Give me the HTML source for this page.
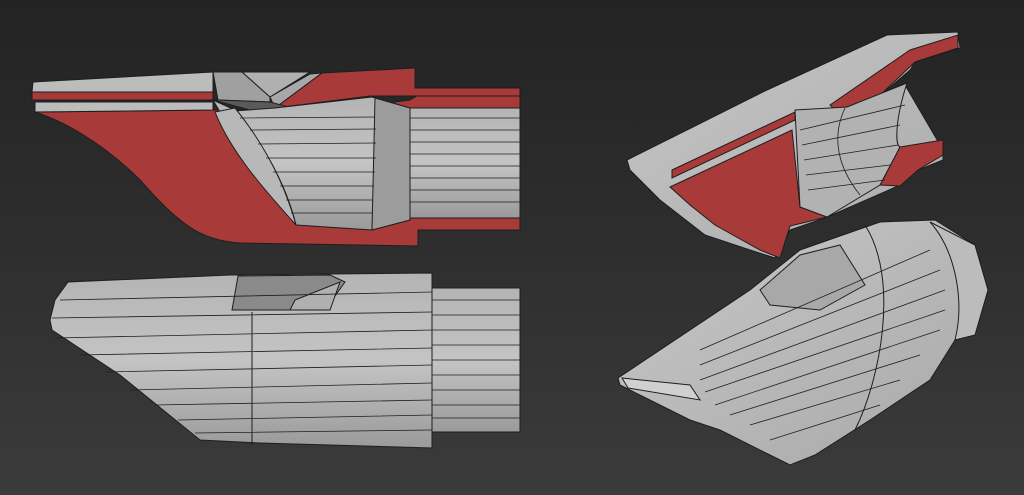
<!DOCTYPE html>
<html><head><style>
html,body{margin:0;padding:0;width:1024px;height:495px;overflow:hidden}
body{background:linear-gradient(#232323,#2e2e2e 50%,#3b3b3b)}
svg{display:block}
</style></head><body>
<svg width="1024" height="495" viewBox="0 0 1024 495" xmlns="http://www.w3.org/2000/svg">
<defs>
<linearGradient id="g1" x1="0" y1="0" x2="0" y2="1"><stop offset="0" stop-color="#b4b4b4"/><stop offset=".5" stop-color="#c4c4c4"/><stop offset="1" stop-color="#9a9a9a"/></linearGradient>
<linearGradient id="g2" x1="0" y1="0" x2="1" y2="1"><stop offset="0" stop-color="#c8c8c8"/><stop offset="1" stop-color="#a8a8a8"/></linearGradient>
</defs>
<g stroke="#1e1e1e" stroke-width="1">
<!-- top-left object -->
<path d="M35,112 L213,110 L300,110 L372,105 L410,100 L430,88 L520,88 L520,230 L418,230 L418,246 L240,243 C200,240 180,225 140,180 C100,140 60,120 35,112Z" fill="#a83a3a"/>
<path d="M33,82 L213,72 L213,92 L32,92Z" fill="#bcbcbc"/>
<path d="M32,92 L213,92 L213,100 L32,100Z" fill="#a83a3a"/>
<path d="M35,102 L213,102 L213,110 L35,112Z" fill="#bcbcbc"/>
<path d="M213,72 L242,72 L270,97 L270,102 L218,100 Z" fill="#a0a0a0"/>
<path d="M242,72 L310,72 L270,97Z" fill="#b0b0b0"/>
<path d="M270,97 L310,74 L322,73 L275,108Z" fill="#a8a8a8"/>
<path d="M322,73 L415,68 L415,88 L520,88 L520,96 L415,96 L370,96 L275,108Z" fill="#a83a3a"/>
<path d="M213,100 L218,100 L270,102 L300,110 L250,110 Z" fill="#5a5a5a"/>
<path d="M213,100 L235,110 C260,140 285,180 296,225 L372,230 L410,220 L410,108 L372,97 L275,108 L220,112 Z" fill="url(#g1)"/>
<path d="M215,112 L235,108 C265,145 285,185 296,225 C260,185 230,150 215,112Z" fill="#b8b8b8"/>
<path d="M410,108 L520,108 L520,218 L410,218Z" fill="url(#g1)"/>
<path d="M375,98 L410,108 L410,220 L372,230Z" fill="#9c9c9c"/>
<g stroke-width=".8" fill="none">
<path d="M240,118 L375,117 M250,130 L376,129 M258,144 L376,143 M266,158 L376,158 M273,172 L375,172 M280,186 L374,186 M286,200 L373,200 M291,213 L373,213"/>
<path d="M410,118 L520,118 M410,130 L520,130 M410,142 L520,142 M410,154 L520,154 M410,166 L520,166 M410,178 L520,178 M410,190 L520,190 M410,202 L520,202"/>
</g>
<!-- bottom-left object -->
<path d="M68,282 L230,275 L432,273 L432,448 L260,443 L200,440 L120,375 L52,330 L50,320 L55,300Z" fill="url(#g1)"/>
<path d="M432,288 L520,288 L520,432 L432,432Z" fill="url(#g1)"/>
<path d="M238,276 L330,275 L345,282 L325,310 L255,310 L232,310Z" fill="#8a8a8a"/>
<path d="M295,300 L340,282 L330,310 L290,310Z" fill="#b0b0b0"/>
<path d="M252,312 L252,445" fill="none"/>
<g stroke-width=".8" fill="none">
<path d="M60,300 L432,292 M52,318 L432,312 M55,338 L432,330 M80,355 L432,348 M105,372 L432,365 M130,390 L432,383 M155,405 L432,400 M178,420 L432,415 M195,433 L432,430"/>
<path d="M432,300 L520,300 M432,315 L520,315 M432,330 L520,330 M432,345 L520,345 M432,360 L520,360 M432,375 L520,375 M432,390 L520,390 M432,405 L520,405 M432,418 L520,418"/>
</g>
<!-- top-right object -->
<path d="M627,160 L767,90 L887,35 L958,32 L960,48 L915,62 L910,70 L875,100 L905,85 L943,150 L943,160 L918,170 L898,186 L825,218 L790,230 L775,258 L750,250 L705,235 L660,200 L630,170Z" fill="url(#g2)"/>
<path d="M670,187 L792,130 L800,207 L827,217 L790,226 L780,258 L760,250 L715,225 L690,205Z" fill="#a83a3a"/>
<path d="M672,170 L795,112 L795,120 L672,178Z" fill="#a83a3a"/>
<path d="M830,105 L910,50 L958,35 L958,48 L915,62 L875,100 L835,110Z" fill="#a83a3a"/>
<path d="M900,147 L943,140 L943,155 L918,170 L900,186 L880,185Z" fill="#a83a3a"/>
<path d="M795,110 L847,107 L907,83 C895,120 895,145 900,147 L880,185 L827,217 L800,207Z" fill="#b2b2b2"/>
<g stroke-width=".8" fill="none">
<path d="M800,130 L905,105 M802,145 L900,125 M804,160 L898,145 M806,175 L890,165 M808,190 L885,180 M845,108 C830,140 840,170 860,195"/>
</g>
<!-- bottom-right object -->
<path d="M618,378 L750,290 L800,250 L880,222 L935,220 L975,245 L988,290 L975,335 L955,340 L930,380 L870,420 L815,455 L790,465 L770,455 L720,430 L690,420 L620,385Z" fill="url(#g2)"/>
<path d="M930,222 L975,245 L988,290 L975,335 L955,340 C965,300 955,250 930,222Z" fill="#bcbcbc"/>
<path d="M865,225 C900,280 880,380 855,430" fill="none"/>
<path d="M760,290 L800,255 L840,245 L865,285 L820,310 L770,305Z" fill="#a8a8a8"/>
<path d="M622,378 L690,385 L700,400 L628,388Z" fill="#d0d0d0"/>
<g stroke-width=".8" fill="none">
<path d="M700,350 L930,250 M700,365 L940,270 M700,380 L945,290 M705,392 L945,310 M715,405 L940,330 M730,415 L920,355 M750,425 L900,380 M770,440 L880,405"/>
</g>
</g>
</svg>
</body></html>
